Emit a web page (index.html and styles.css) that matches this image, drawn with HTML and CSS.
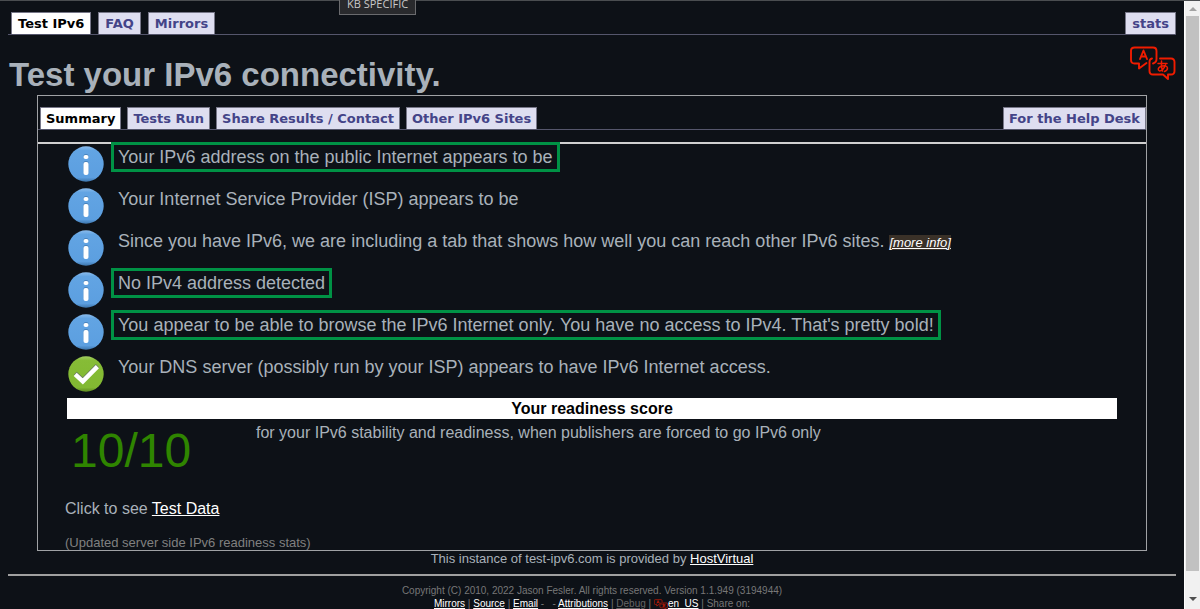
FILE: index.html
```html
<!DOCTYPE html>
<html lang="en">
<head>
    <meta charset="UTF-8">
    <meta name="viewport" content="width=device-width, initial-scale=1.0">
    <title>Test your IPv6.</title>
    <link rel="stylesheet" href="styles.css">
</head>
<body>
    <!-- shared icons -->
    <svg class="defs" aria-hidden="true">
        <defs>
            <linearGradient id="blue" x1="0" y1="0" x2="0" y2="1">
                <stop offset="0" stop-color="#8bbcec"/>
                <stop offset="0.12" stop-color="#62a4e3"/>
                <stop offset="0.88" stop-color="#5c9fe0"/>
                <stop offset="1" stop-color="#3d75ac"/>
            </linearGradient>
            <linearGradient id="green" x1="0" y1="0" x2="0" y2="1">
                <stop offset="0" stop-color="#a3cf62"/>
                <stop offset="0.12" stop-color="#86bc36"/>
                <stop offset="0.88" stop-color="#82b932"/>
                <stop offset="1" stop-color="#5e8a20"/>
            </linearGradient>
        </defs>
        <symbol id="info" viewBox="0 0 36 36">
            <circle cx="18" cy="18" r="17.7" fill="url(#blue)"/>
            <rect x="15.5" y="8" width="5" height="4.6" rx="2.2" fill="#4a83bb"/>
            <rect x="15.5" y="9" width="5" height="4" rx="2" fill="#fff"/>
            <rect x="15.5" y="15" width="5" height="13" rx="2" fill="#4a83bb"/>
            <rect x="15.5" y="16" width="5" height="13" rx="2" fill="#fff"/>
        </symbol>
        <symbol id="ok" viewBox="0 0 36 36">
            <circle cx="18" cy="18" r="17.7" fill="url(#green)"/>
            <path d="M7.2 17.4l7.6 7L29.4 9.6" fill="none" stroke="#6a7a62" stroke-width="4.4"/>
            <path d="M7.2 18.4l7.6 7L29.4 10.6" fill="none" stroke="#fff" stroke-width="4.4"/>
        </symbol>
        <symbol id="lang" viewBox="0 0 46 35">
            <g fill="none" stroke="#f01c00" stroke-width="1.9" stroke-linecap="round" stroke-linejoin="round">
                <path d="M16.5 17L9 22.500V17.500H4.500Q1 17.500 1 14V4.500Q1 1.500 4.500 1.500H23Q26.500 1.500 26.500 5V13Q26.500 16.500 23 17.500"/>
                <path d="M22 12.500Q19.500 13 19.500 16V25Q19.500 28.500 23 28.500H33L38 33V28.500H41Q44.500 28.500 44.500 25V16Q44.500 12.500 41 12.500H30"/>
                <path d="M10 13L13.500 4.500L17 13M11 10.500H16"/>
                <path d="M28 17.500H37M31.500 15Q31 21 32.500 25M35.500 19Q33 25 29.500 25Q26.500 23 30.500 20.500Q37 18.500 37.500 22Q37.500 24.500 34.500 25.500" stroke-width="1.500"/>
            </g>
        </symbol>
    </svg>

    <div class="screen">
        <div class="page">
            <nav class="tabs">
                <a class="tab selected" href="#">Test IPv6</a>
                <a class="tab" href="#">FAQ</a>
                <a class="tab" href="#">Mirrors</a>
                <a class="tab right" href="#">stats</a>
            </nav>

            <header class="title">
                <h1>Test your IPv6 connectivity.</h1>
                <a href="#" aria-label="Language"><svg class="lang"><use href="#lang"/></svg></a>
            </header>

            <main class="panel">
                <nav class="tabs">
                    <a class="tab selected" href="#">Summary</a>
                    <a class="tab" href="#">Tests Run</a>
                    <a class="tab" href="#">Share Results / Contact</a>
                    <a class="tab" href="#">Other IPv6 Sites</a>
                    <a class="tab right" href="#">For the Help Desk</a>
                </nav>

                <div class="content">
                    <ul class="results">
                        <li><svg class="icon"><use href="#info"/></svg><p><span class="mark">Your IPv6 address on the public Internet appears to be</span></p></li>
                        <li><svg class="icon"><use href="#info"/></svg><p>Your Internet Service Provider (ISP) appears to be</p></li>
                        <li><svg class="icon"><use href="#info"/></svg><p>Since you have IPv6, we are including a tab that shows how well you can reach other IPv6 sites. <a class="more" href="#">[more info]</a></p></li>
                        <li><svg class="icon"><use href="#info"/></svg><p><span class="mark">No IPv4 address detected</span></p></li>
                        <li><svg class="icon"><use href="#info"/></svg><p><span class="mark">You appear to be able to browse the IPv6 Internet only. You have no access to IPv4. That's pretty bold!</span></p></li>
                        <li><svg class="icon"><use href="#ok"/></svg><p>Your DNS server (possibly run by your ISP) appears to have IPv6 Internet access.</p></li>
                    </ul>

                    <table class="readiness">
                        <tr><th colspan="2">Your readiness score</th></tr>
                        <tr>
                            <td class="score">10/10</td>
                            <td class="about">for your IPv6 stability and readiness, when publishers are forced to go IPv6 only</td>
                        </tr>
                    </table>

                    <p class="data">Click to see <a href="#">Test Data</a></p>
                    <p class="updated">(Updated server side IPv6 readiness stats)</p>
                </div>
            </main>

            <footer>
                <p class="provider">This instance of test-ipv6.com is provided by <a href="#">HostVirtual</a></p>
                <hr>
                <p class="copyright">Copyright (C) 2010, 2022 Jason Fesler. All rights reserved. Version 1.1.949 (3194944)</p>
                <p class="links"><a href="#">Mirrors</a> | <a href="#">Source</a> | <a href="#">Email</a> -&nbsp;&nbsp; - <a href="#">Attributions</a> | <a class="debug" href="#">Debug</a> | <a href="#"><svg class="lang-small"><use href="#lang"/></svg>en_US</a> | Share on:</p>
            </footer>
        </div>

        <div class="scrollbar" aria-hidden="true">
            <span class="up"></span>
            <span class="thumb"></span>
            <span class="down"></span>
        </div>
    </div>

    <!-- tooltip cut off by the top of the window -->
    <div class="tooltip">KB SPECIFIC</div>
</body>
</html>
```
FILE: styles.css
```css
*{
    box-sizing: border-box;
}
body{
    margin: 0;
    background: #0d1117;
    color: #a9b1ba;
    font-family: "Liberation Sans", Arial, sans-serif;
    font-size: 16px;
    overflow: hidden;
}
h1, p, ul{
    margin: 0;
    padding: 0;
}
a{
    color: #fff;
}
.defs{
    position: absolute;
    width: 0;
    height: 0;
}
.screen{
    display: flex;
    height: 100vh;
    overflow: hidden;
    border-top: 1px solid #4a4d50;
}
.page{
    flex: 1;
    min-width: 0;
    padding: 11px 8px 0;
}

/* tabs */
.tabs{
    display: flex;
    gap: 7px;
    padding-left: 3px;
    border-bottom: 1px solid #55566c;
}
.tab{
    padding: 0 6px;
    border: 1px solid #778;
    border-bottom: 0;
    background: #dedef0;
    color: #448;
    font: bold 13px/21px "DejaVu Sans", Verdana, sans-serif;
    text-decoration: none;
    white-space: nowrap;
}
.tab.selected{
    background: #fff;
    color: #000;
}
.tab.right{
    margin-left: auto;
}

.title{
    display: flex;
    justify-content: space-between;
    height: 60px;
    padding-top: 11px;
}
h1{
    padding: 9px 0 0 1px;
    font-size: 33px;
    line-height: 40px;
}
.lang{
    display: block;
    width: 46px;
    height: 35px;
}

/* results panel */
.panel{
    margin: 0 29px;
    padding-top: 11px;
    border: 1px solid #a0a2a5;
}
.panel .tabs{
    gap: 6px;
    margin-bottom: 12px;
    padding-left: 2px;
}
.panel .tab{
    padding: 0 5px;
}
.content{
    padding: 2px 29px 0;
    border-top: 2px solid #d0d0d0;
}
.results{
    list-style: none;
    font-size: 18px;
    line-height: 22px;
}
.results li{
    display: flex;
    gap: 14px;
    height: 42px;
    padding-left: 1px;
}
.icon{
    width: 36px;
    height: 36px;
}
.mark{
    margin-left: -4px;
    padding: 2px 4px;
    outline: 3px solid #009245;
}
.more{
    background: #3a3128;
    font-size: 13px;
    font-style: italic;
}

.readiness{
    width: 100%;
    border-collapse: collapse;
}
.readiness th{
    padding: 0;
    background: #fff;
    color: #000;
    line-height: 21px;
}
.readiness td{
    padding: 0;
    vertical-align: top;
}
.readiness .score{
    width: 189px;
    padding: 2px 0 0 4px;
    color: #2f8500;
    font-size: 48px;
    line-height: 60px;
}
.readiness .about{
    padding-top: 4px;
    line-height: 20px;
}
.data{
    margin: 18px 0 0 -2px;
    line-height: 20px;
}
.updated{
    margin: 16px 0 0 -2px;
    color: #808080;
    font-size: 13px;
    line-height: 15px;
}

footer{
    text-align: center;
    white-space: nowrap;
}
.provider{
    font-size: 13px;
    line-height: 15px;
}
hr{
    margin: 8px 0;
    border: 0;
    border-top: 2px solid #a0a0a0;
}
.copyright, .links{
    color: #777;
    font-size: 10px;
    line-height: 13px;
}
.debug{
    color: #666;
}
.lang-small{
    width: 14px;
    height: 11px;
    vertical-align: bottom;
}

/* scrollbar */
.scrollbar{
    display: flex;
    flex-direction: column;
    align-items: center;
    width: 16px;
    border-left: 1px solid #fff;
    background: #f1f1f1;
}
.up, .down{
    border: 4px solid transparent;
}
.up{
    margin: 2px 0 5px;
    border-bottom-color: #a3a3a3;
}
.down{
    margin: 26px 0 4px;
    border-top-color: #505050;
}
.thumb{
    flex: 1;
    width: 13px;
    background: #c1c1c1;
}

.tooltip{
    position: absolute;
    top: -8px;
    left: 339px;
    padding: 0 7px;
    border: 1px solid #6a6b6e;
    background: #292a2d;
    color: #c8c8c8;
    font: 11px/21px "Open Sans", "Noto Sans", sans-serif;
}
```
